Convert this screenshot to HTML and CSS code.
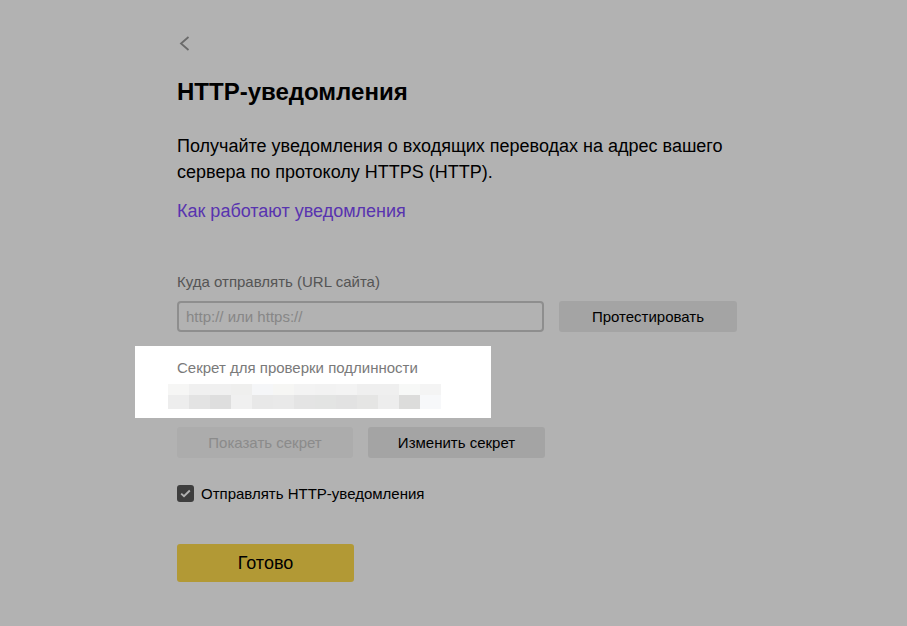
FILE: index.html
```html
<!DOCTYPE html>
<html lang="ru">
<head>
<meta charset="utf-8">
<title>HTTP-уведомления</title>
<link rel="stylesheet" href="styles.css">
</head>
<body>
<main class="page">
  <a class="back" href="#" aria-label="Назад">
    <svg width="12" height="16" viewBox="0 0 12 16"><polyline points="9.5,1 2,7.5 9.5,14" fill="none" stroke="#999" stroke-width="1.8"/></svg>
  </a>
  <h1 class="title">HTTP-уведомления</h1>
  <p class="lead">Получайте уведомления о входящих переводах на адрес вашего<br>сервера по протоколу HTTPS (HTTP).</p>
  <a class="link" href="#">Как работают уведомления</a>

  <div class="field">
    <div class="label">Куда отправлять (URL сайта)</div>
    <div class="row">
      <input class="input" type="text" placeholder="http:// или https://">
      <button class="btn btn-test">Протестировать</button>
    </div>
  </div>

  <div class="secret">
    <div class="label">Секрет для проверки подлинности</div>
    <div class="pixels">
      <span></span><span></span><span></span><span></span><span></span><span></span><span></span><span></span><span></span><span></span><span></span><span></span><span></span>
      <span></span><span></span><span></span><span></span><span></span><span></span><span></span><span></span><span></span><span></span><span></span><span></span><span></span>
    </div>
  </div>

  <div class="row buttons">
    <button class="btn btn-disabled" disabled>Показать секрет</button>
    <button class="btn btn-change">Изменить секрет</button>
  </div>

  <label class="check">
    <span class="box"><svg width="11" height="9" viewBox="0 0 11 9"><polyline points="1.2,4.6 4,7.2 9.8,1.5" fill="none" stroke="#fff" stroke-width="1.9"/></svg></span>
    <span>Отправлять HTTP-уведомления</span>
  </label>

  <button class="btn btn-done">Готово</button>
</main>
</body>
</html>
```

FILE: styles.css
```css
html, body {
  margin: 0;
  padding: 0;
  background: #fff;
  overflow: hidden;
}
body {
  font-family: "Liberation Sans", Arial, sans-serif;
  color: #000;
  height: 626px;
}
.page {
  padding-left: 177px;
  padding-top: 36px;
  width: 560px;
}
.back {
  display: block;
  width: 14px;
  height: 16px;
  margin-left: 2px;
}
.back svg { display: block; }
.title {
  margin: 26px 0 0;
  font-size: 24px;
  line-height: 28px;
  font-weight: bold;
}
.lead {
  margin: 27px 0 0;
  font-size: 18px;
  line-height: 26px;
}
.link {
  display: block;
  margin-top: 13px;
  font-size: 18px;
  line-height: 26px;
  color: #7f4bfb;
  text-decoration: none;
  width: max-content;
}
.field { margin-top: 48px; }
.label {
  font-size: 15px;
  line-height: 20px;
  color: #7a7a7a;
}
.row {
  display: flex;
  gap: 15px;
}
.field .row { margin-top: 9px; }
.input {
  box-sizing: border-box;
  width: 367px;
  height: 31px;
  border: 2px solid #ccc;
  border-radius: 4px;
  padding: 0 7px;
  font: 15px "Liberation Sans", Arial, sans-serif;
  background: transparent;
  outline: none;
}
.input::placeholder { color: #c2c2c2; }
.btn {
  box-sizing: border-box;
  height: 31px;
  border: 0;
  border-radius: 3px;
  background: #ebebeb;
  font: 15px "Liberation Sans", Arial, sans-serif;
  color: #000;
  padding: 0;
}
.btn-test { width: 178px; }
.secret {
  position: relative;
  z-index: 2;
  margin: 14px 0 0 -42px;
  width: 356px;
  box-sizing: border-box;
  padding: 12px 0 9px 42px;
  background: #fff;
  box-shadow: 0 0 0 3000px rgba(0, 0, 0, 0.3);
}
.pixels {
  margin: 6px 0 0 -9px;
  display: grid;
  grid-template-columns: repeat(13, 21px);
  grid-template-rows: 11px 14px;
  width: 273px;
}
.pixels span:nth-child(1) { background: #f6f6f5; }
.pixels span:nth-child(2) { background: #f0f0f0; }
.pixels span:nth-child(3) { background: #f0f0f0; }
.pixels span:nth-child(4) { background: #efefee; }
.pixels span:nth-child(5) { background: #f5f6f8; }
.pixels span:nth-child(6) { background: #f6f6f4; }
.pixels span:nth-child(7) { background: #f3f3f3; }
.pixels span:nth-child(8) { background: #f2f2f2; }
.pixels span:nth-child(9) { background: #f3f3f3; }
.pixels span:nth-child(10) { background: #efefef; }
.pixels span:nth-child(11) { background: #efefef; }
.pixels span:nth-child(12) { background: #f7f8f7; }
.pixels span:nth-child(13) { background: #f4f4f4; }
.pixels span:nth-child(14) { background: #ededed; }
.pixels span:nth-child(15) { background: #e3e3e3; }
.pixels span:nth-child(16) { background: #dedede; }
.pixels span:nth-child(17) { background: #f0f0f0; }
.pixels span:nth-child(18) { background: #e8e8e8; }
.pixels span:nth-child(19) { background: #e9e9e9; }
.pixels span:nth-child(20) { background: #e4e4e4; }
.pixels span:nth-child(21) { background: #e3e4e3; }
.pixels span:nth-child(22) { background: #e2e2e2; }
.pixels span:nth-child(23) { background: #e5e5e4; }
.pixels span:nth-child(24) { background: #ededed; }
.pixels span:nth-child(25) { background: #dcdcdb; }
.pixels span:nth-child(26) { background: #f7f8fa; }
.buttons { margin-top: 9px; }
.btn-disabled {
  width: 176px;
  background: #f6f6f6;
  color: #c8c8c8;
}
.btn-change { width: 177px; }
.check {
  margin-top: 27px;
  display: flex;
  align-items: center;
  gap: 7px;
  font-size: 15px;
  line-height: 17px;
  width: max-content;
}
.box {
  width: 17px;
  height: 17px;
  border-radius: 3px;
  background: #5a5a5a;
  display: flex;
  align-items: center;
  justify-content: center;
}
.box svg { display: block; }
.btn-done {
  display: block;
  margin-top: 42px;
  width: 177px;
  height: 38px;
  background: #ffdb4d;
  font-size: 18px;
}
```
